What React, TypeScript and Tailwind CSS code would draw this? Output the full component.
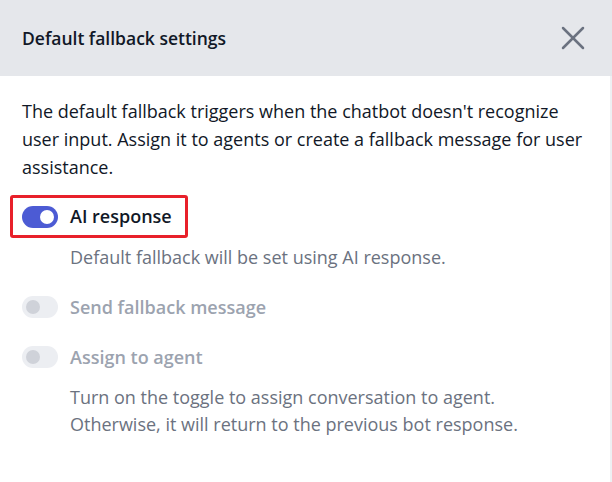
import { X } from "lucide-react";

function Toggle({ on }: { on: boolean }) {
  return (
    <div
      className={
        on
          ? "w-[36px] h-[22px] rounded-full bg-[#4c5bd4] flex items-center justify-end px-[4px] shrink-0"
          : "w-[36px] h-[22px] rounded-full bg-[#eceef2] flex items-center justify-start px-[4px] shrink-0"
      }
    >
      <div
        className={
          on
            ? "w-[14px] h-[14px] rounded-full bg-white"
            : "w-[14px] h-[14px] rounded-full bg-[#cfd2d9]"
        }
      />
    </div>
  );
}

export default function App() {
  return (
    <div
      className="w-[612px] h-[482px] bg-white flex flex-col overflow-hidden"
      style={{ fontFamily: '"Open Sans", "Noto Sans", sans-serif' }}
    >
      {/* Header */}
      <div className="h-[76px] bg-[#e5e7eb] flex items-center justify-between pl-[22px] pr-[19px] shrink-0">
        <h2 className="text-[17.5px] font-semibold text-[#111827]">Default fallback settings</h2>
        <X className="w-[40px] h-[40px] text-[#6b7280]" strokeWidth={1.5} />
      </div>

      {/* Body */}
      <div className="flex-1 border-r-2 border-[#eef0f3] pt-[21px]">
        <p className="ml-[22px] w-[565px] text-[18px] leading-[28px] text-[#111827]">
          The default fallback triggers when the chatbot doesn't recognize user input. Assign it to agents or create a
          fallback message for user assistance.
        </p>

        {/* AI response */}
        <div className="mt-[14px] ml-[10px] inline-flex items-center gap-[12px] border-[3px] border-[#e8202a] rounded-[3px] pl-[9px] pr-[13px] h-[43px]">
          <Toggle on />
          <span className="text-[18px] font-semibold text-[#111827]">AI response</span>
        </div>
        <p className="ml-[70px] mt-[6px] text-[18px] leading-[27px] text-[#6b7280]">
          Default fallback will be set using AI response.
        </p>

        {/* Send fallback message */}
        <div className="mt-[25px] ml-[22px] flex items-center gap-[12px] h-[22px]">
          <Toggle on={false} />
          <span className="text-[18px] font-semibold text-[#9ca3af]">Send fallback message</span>
        </div>

        {/* Assign to agent */}
        <div className="mt-[28px] ml-[22px] flex items-center gap-[12px] h-[22px]">
          <Toggle on={false} />
          <span className="text-[18px] font-semibold text-[#9ca3af]">Assign to agent</span>
        </div>
        <p className="ml-[70px] mt-[16px] text-[18px] leading-[27px] text-[#6b7280]">
          Turn on the toggle to assign conversation to agent.
          <br />
          Otherwise, it will return to the previous bot response.
        </p>
      </div>
    </div>
  );
}
